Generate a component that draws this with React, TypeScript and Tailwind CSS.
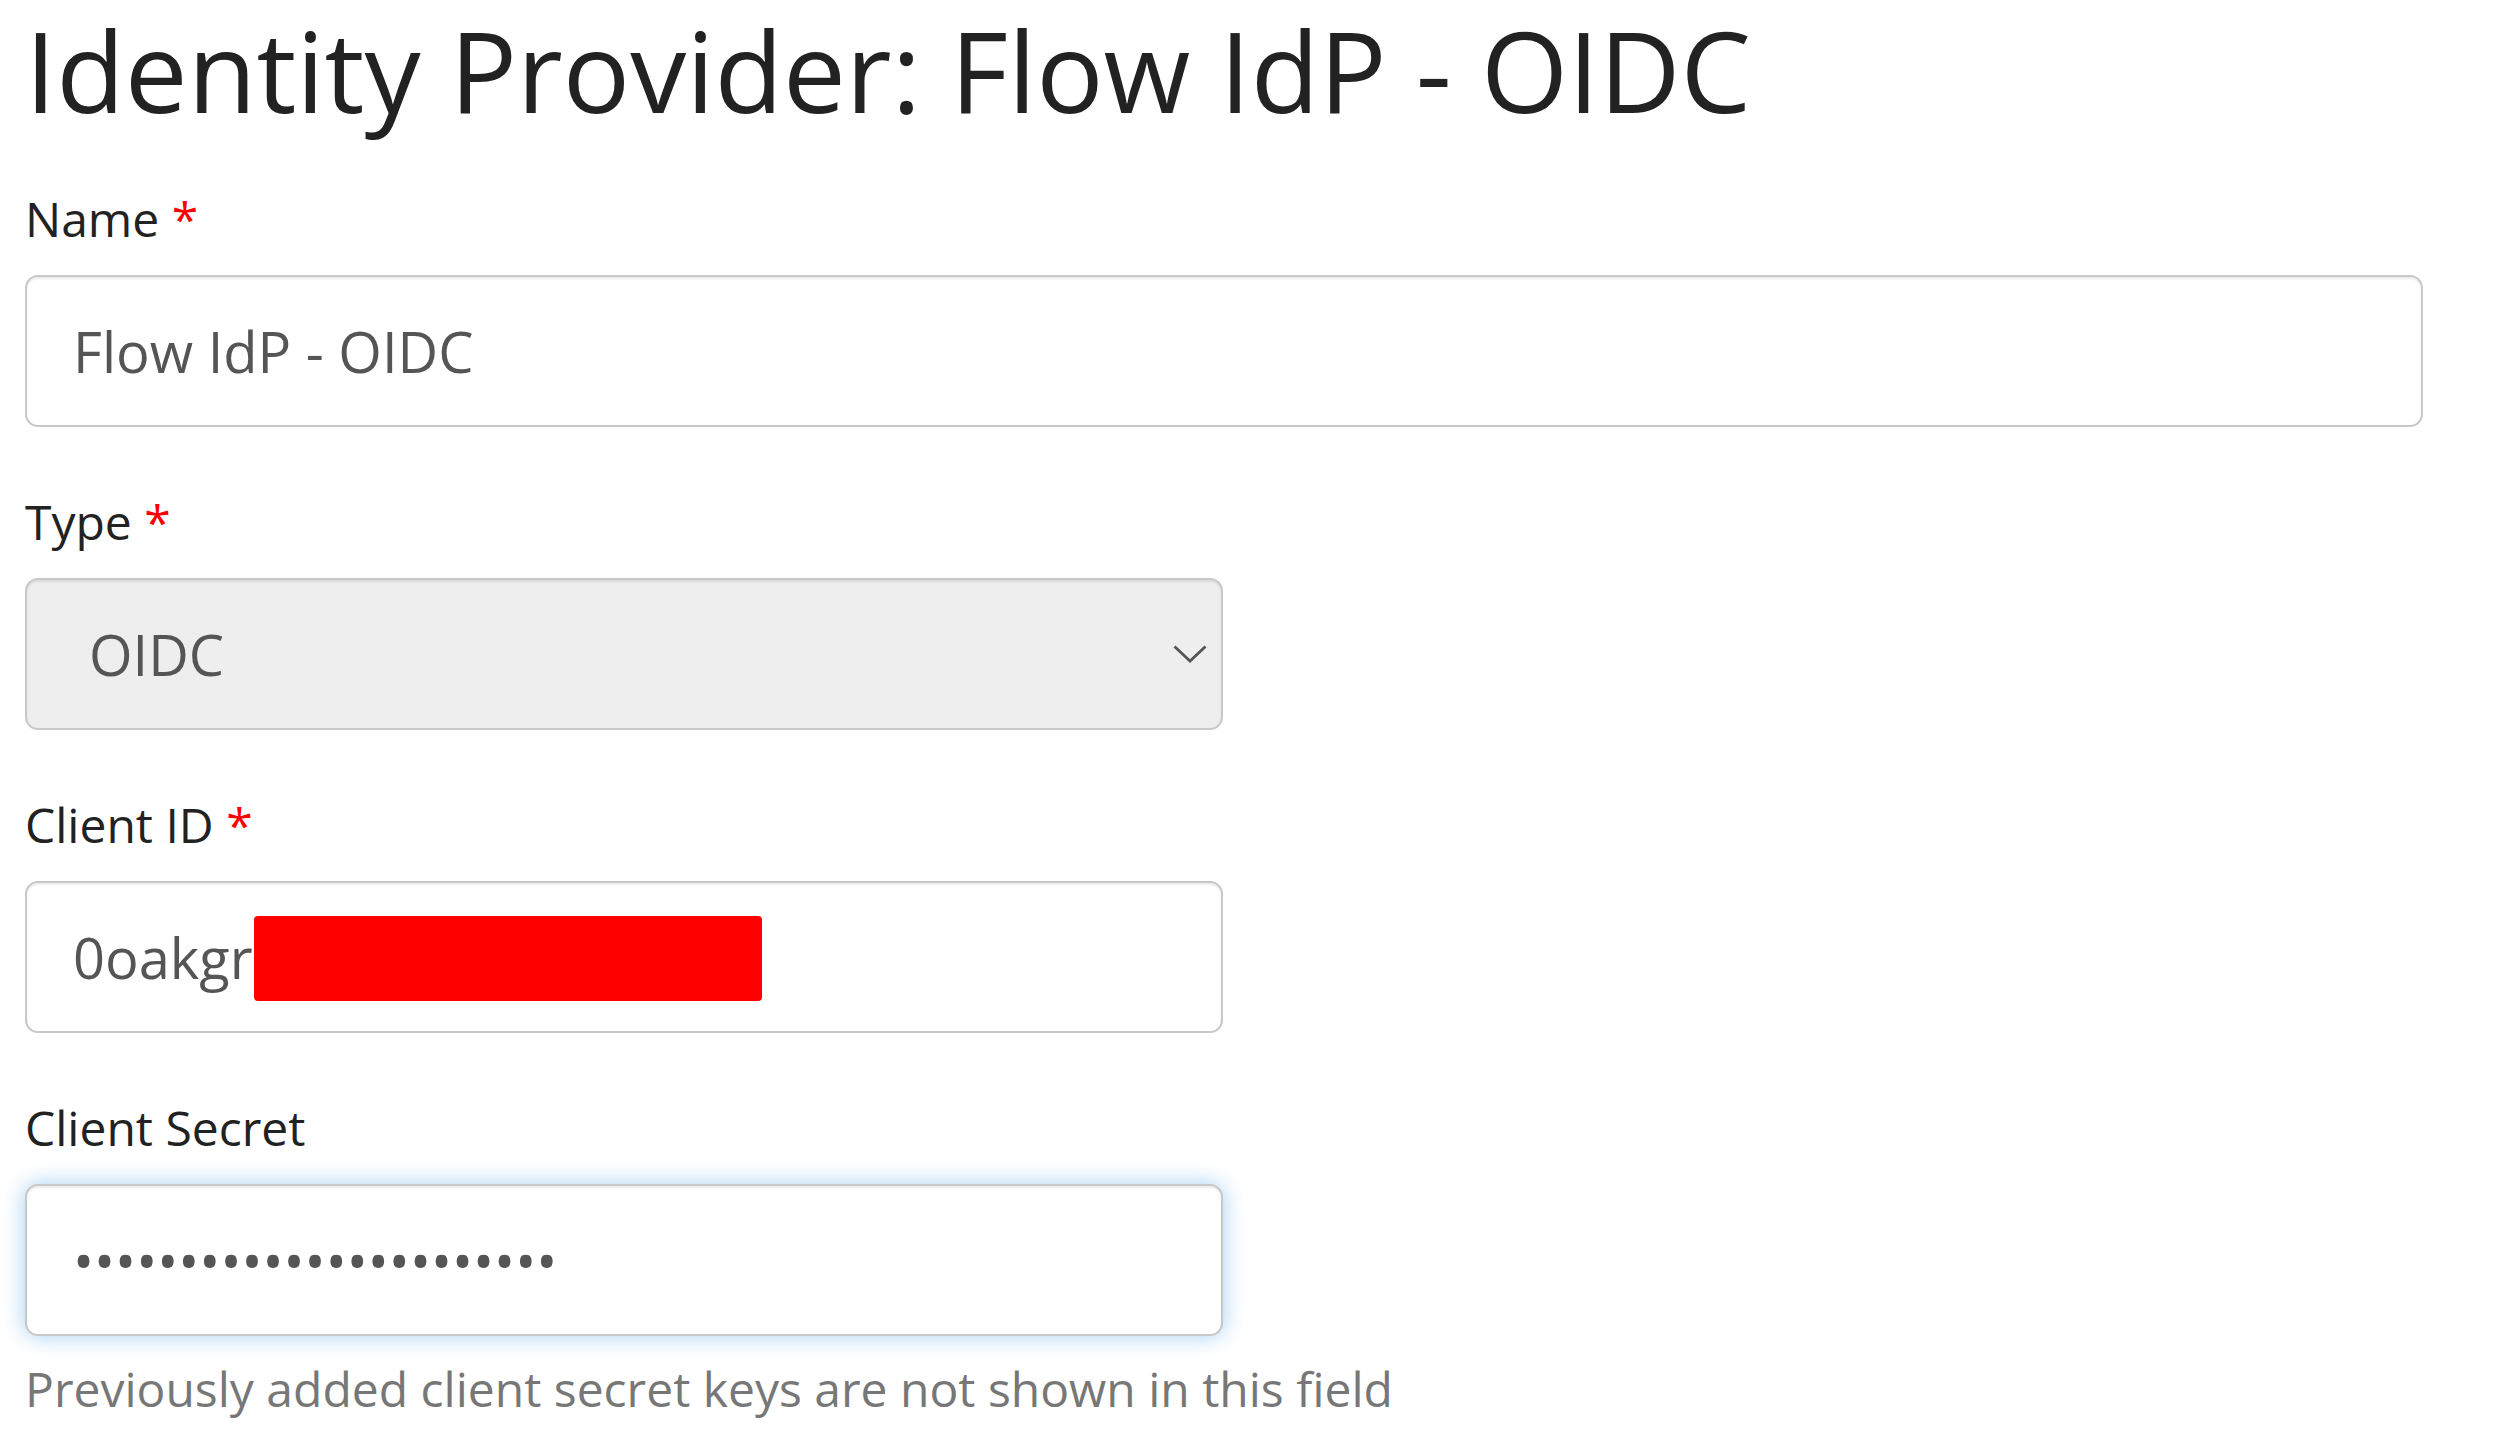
import type { ReactNode } from "react";

function Field({
  label,
  required,
  children,
}: {
  label: string;
  required?: boolean;
  children: ReactNode;
}) {
  return (
    <div className="flex flex-col">
      <label className="h-[60px] text-[48px] leading-[60px] text-[#222] whitespace-nowrap">
        {label}
        {required && <span className="text-[#ff0000]"> *</span>}
      </label>
      <div className="mt-[26px]">{children}</div>
    </div>
  );
}

const box =
  "relative flex h-[152px] items-center rounded-[13px] border-2 border-[#c8c8c8] text-[56px] text-[#555] whitespace-nowrap";

export default function App() {
  return (
    <div className="min-h-screen bg-white pl-[25px] pt-[6px] font-['Open_Sans',sans-serif]">
      <h1 className="h-[128px] text-[112px] leading-[128px] text-[#222] whitespace-nowrap">
        Identity Provider: Flow IdP - OIDC
      </h1>

      <div className="mt-[55px] flex flex-col gap-[65px]">
        <Field label="Name" required>
          <div className={`${box} w-[2398px] bg-white px-[46px] shadow-[inset_0_2px_2px_rgba(0,0,0,0.08)]`}>
            Flow IdP - OIDC
          </div>
        </Field>

        <Field label="Type" required>
          <div className={`${box} w-[1198px] bg-[#eeeeee] pl-[62px] shadow-[inset_0_2px_2px_rgba(0,0,0,0.08)]`}>
            OIDC
            <svg
              viewBox="0 0 34 18"
              className="absolute right-[14px] top-1/2 h-[18px] w-[34px] -translate-y-1/2"
              aria-hidden
            >
              <path d="M1.5 1.5 17 16 32.5 1.5" fill="none" stroke="#555" strokeWidth="2.8" />
            </svg>
          </div>
        </Field>

        <Field label="Client ID" required>
          <div className={`${box} w-[1198px] overflow-hidden bg-white px-[46px] shadow-[inset_0_2px_2px_rgba(0,0,0,0.08)]`}>
            0oakgrxxxxxxxxxxxx
            <span className="absolute left-[227px] top-[33px] h-[85px] w-[508px] rounded-[4px] bg-[#ff0000]" />
          </div>
        </Field>

        <Field label="Client Secret">
          <div
            className={`${box} w-[1198px] bg-white px-[46px] shadow-[inset_0_2px_2px_rgba(0,0,0,0.08),0_0_22px_rgba(102,175,233,0.6)]`}
          >
            {"•".repeat(23)}
          </div>
        </Field>
      </div>

      <p className="mt-[25px] h-[56px] text-[48px] leading-[56px] text-[#777] whitespace-nowrap">
        Previously added client secret keys are not shown in this field
      </p>
    </div>
  );
}
